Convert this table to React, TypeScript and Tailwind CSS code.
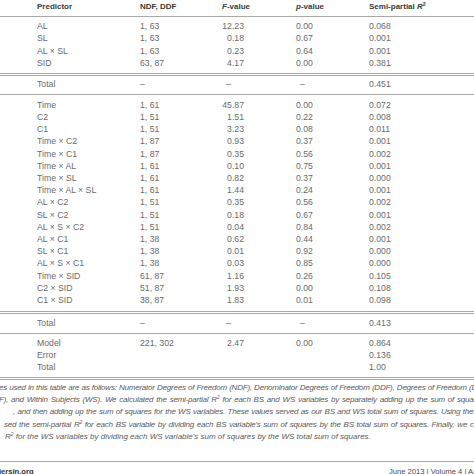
import React from 'react';

type Row = [string, string, string, string, string];

const betweenRows: Row[] = [
  ['AL', '1, 63', '12.23', '0.00', '0.068'],
  ['SL', '1, 63', '0.18', '0.67', '0.001'],
  ['AL × SL', '1, 63', '0.23', '0.64', '0.001'],
  ['SID', '63, 87', '4.17', '0.00', '0.381'],
];

const withinRows: Row[] = [
  ['Time', '1, 61', '45.87', '0.00', '0.072'],
  ['C2', '1, 51', '1.51', '0.22', '0.008'],
  ['C1', '1, 51', '3.23', '0.08', '0.011'],
  ['Time × C2', '1, 87', '0.93', '0.37', '0.001'],
  ['Time × C1', '1, 87', '0.35', '0.56', '0.002'],
  ['Time × AL', '1, 61', '0.10', '0.75', '0.001'],
  ['Time × SL', '1, 61', '0.82', '0.37', '0.000'],
  ['Time × AL × SL', '1, 61', '1.44', '0.24', '0.001'],
  ['AL × C2', '1, 51', '0.35', '0.56', '0.002'],
  ['SL × C2', '1, 51', '0.18', '0.67', '0.001'],
  ['AL × S × C2', '1, 51', '0.04', '0.84', '0.002'],
  ['AL × C1', '1, 38', '0.62', '0.44', '0.001'],
  ['SL × C1', '1, 38', '0.01', '0.92', '0.000'],
  ['AL × S × C1', '1, 38', '0.03', '0.85', '0.000'],
  ['Time × SID', '61, 87', '1.16', '0.26', '0.105'],
  ['C2 × SID', '51, 87', '1.93', '0.00', '0.108'],
  ['C1 × SID', '38, 87', '1.83', '0.01', '0.098'],
];

const modelRows: Row[] = [
  ['Model', '221, 302', '2.47', '0.00', '0.864'],
  ['Error', '', '', '', '0.136'],
  ['Total', '', '', '', '1.00'],
];

const grid = 'grid grid-cols-[103px_82px_74px_73px_1fr] pl-[37px]';

function DataRow({ row, h = 'h-[12.2px]' }: { row: Row; h?: string }) {
  const [name, df, f, p, r] = row;
  return (
    <div className={`${grid} ${h} items-center text-[8.7px] text-[#6a6a6a] whitespace-nowrap`}>
      <div>{name}</div>
      <div>{df}</div>
      <div>
        {f === '–' ? (
          <div className="pl-[4px]">–</div>
        ) : (
          <div className="w-[22px] text-right">{f}</div>
        )}
      </div>
      <div className={p === '–' ? 'pl-[4px]' : ''}>{p}</div>
      <div>{r}</div>
    </div>
  );
}

function Rule({ double }: { double?: boolean }) {
  if (double) {
    return (
      <div className="flex flex-col gap-[1px]">
        <div className="h-[1px] bg-[#a9a9a9]" />
        <div className="h-[1px] bg-[#a9a9a9]" />
      </div>
    );
  }
  return <div className="h-[1px] bg-[#a9a9a9]" />;
}

// justified caption line; slight negative tracking so the whole line fits before justify spreads it
function CaptionLine({ text, className }: { text: React.ReactNode; className: string }) {
  return (
    <div
      className={`h-[12.3px] leading-[12.3px] whitespace-nowrap tracking-[-0.22px] text-justify [text-align-last:justify] ${className}`}
    >
      {text}
    </div>
  );
}

// small raised 2 that does not change the line box
const Sq = ({ size = 'text-[5px]' }: { size?: string }) => (
  <span className={`relative top-[-3px] ${size} leading-none`}>2</span>
);

const R2 = (
  <>
    <i>R</i>
    <Sq />
  </>
);

export default function App() {
  return (
    <div className="w-[474px] h-[474px] overflow-hidden bg-white font-['Liberation_Sans',Arial,sans-serif]">
      {/* header */}
      <div className={`${grid} h-[16px] pb-[3px] items-center text-[8px] font-bold text-[#3a3a3a] whitespace-nowrap`}>
        <div>Predictor</div>
        <div>NDF, DDF</div>
        <div>
          <i>F</i>-value
        </div>
        <div>
          <i>p</i>-value
        </div>
        <div>
          Semi-partial <i>R</i>
          <Sq size="text-[5.5px]" />
        </div>
      </div>
      <Rule />

      {/* between subjects */}
      <div className="pt-[3px] pb-[4px]">
        {betweenRows.map((r) => (
          <DataRow key={r[0]} row={r} h="h-[12.3px]" />
        ))}
      </div>
      <Rule double />
      <div className="pt-[2px] pb-[3.5px]">
        <DataRow row={['Total', '–', '–', '–', '0.451']} />
      </div>
      <Rule />

      {/* within subjects */}
      <div className="pt-[4px] pb-[4.5px]">
        {withinRows.map((r) => (
          <DataRow key={r[0]} row={r} />
        ))}
      </div>
      <Rule double />
      <div className="pt-[3px] pb-[4px]">
        <DataRow row={['Total', '–', '–', '–', '0.413']} />
      </div>
      <Rule />

      {/* model */}
      <div className="pt-[3px] pb-[3.5px]">
        {modelRows.map((r) => (
          <DataRow key={r[0]} row={r} />
        ))}
      </div>
      <Rule double />

      {/* caption */}
      <div className="pt-[2px] pb-[18px] text-[8px] italic text-[#5a5a5a]">
        <CaptionLine
          className="ml-[-1px] w-[478px]"
          text="es used in this table are as follows: Numerator Degrees of Freedom (NDF), Denominator Degrees of Freedom (DDF), Degrees of Freedom (D"
        />
        <CaptionLine
          className="ml-[-1px] w-[477px]"
          text={
            <>
              F), and Within Subjects (WS). We calculated the semi-partial {R2} for each BS and WS variables by separately adding up the sum of squar
            </>
          }
        />
        <CaptionLine
          className="ml-[13px] w-[464px]"
          text=", and then adding up the sum of squares for the WS variables. These values served as our BS and WS total sum of squares. Using thes"
        />
        <CaptionLine
          className="ml-[4px] w-[474px]"
          text={
            <>
              sed the semi-partial {R2} for each BS variable by dividing each BS variable's sum of squares by the BS total sum of squares. Finally, we ca
            </>
          }
        />
        <div className="h-[12.3px] leading-[12.3px] whitespace-nowrap ml-[5px]">
          {R2} for the WS variables by dividing each WS variable's sum of squares by the WS total sum of squares.
        </div>
      </div>

      {/* footer */}
      <Rule />
      <div className="flex justify-between items-center h-[12px] mt-[3px] text-[7.6px] text-[#4a4a4a] whitespace-nowrap">
        <div className="ml-[-1px] font-bold text-[#333]">iersin.org</div>
        <div className="w-[85px] overflow-hidden">June 2013 | Volume 4 | Article</div>
      </div>
    </div>
  );
}
